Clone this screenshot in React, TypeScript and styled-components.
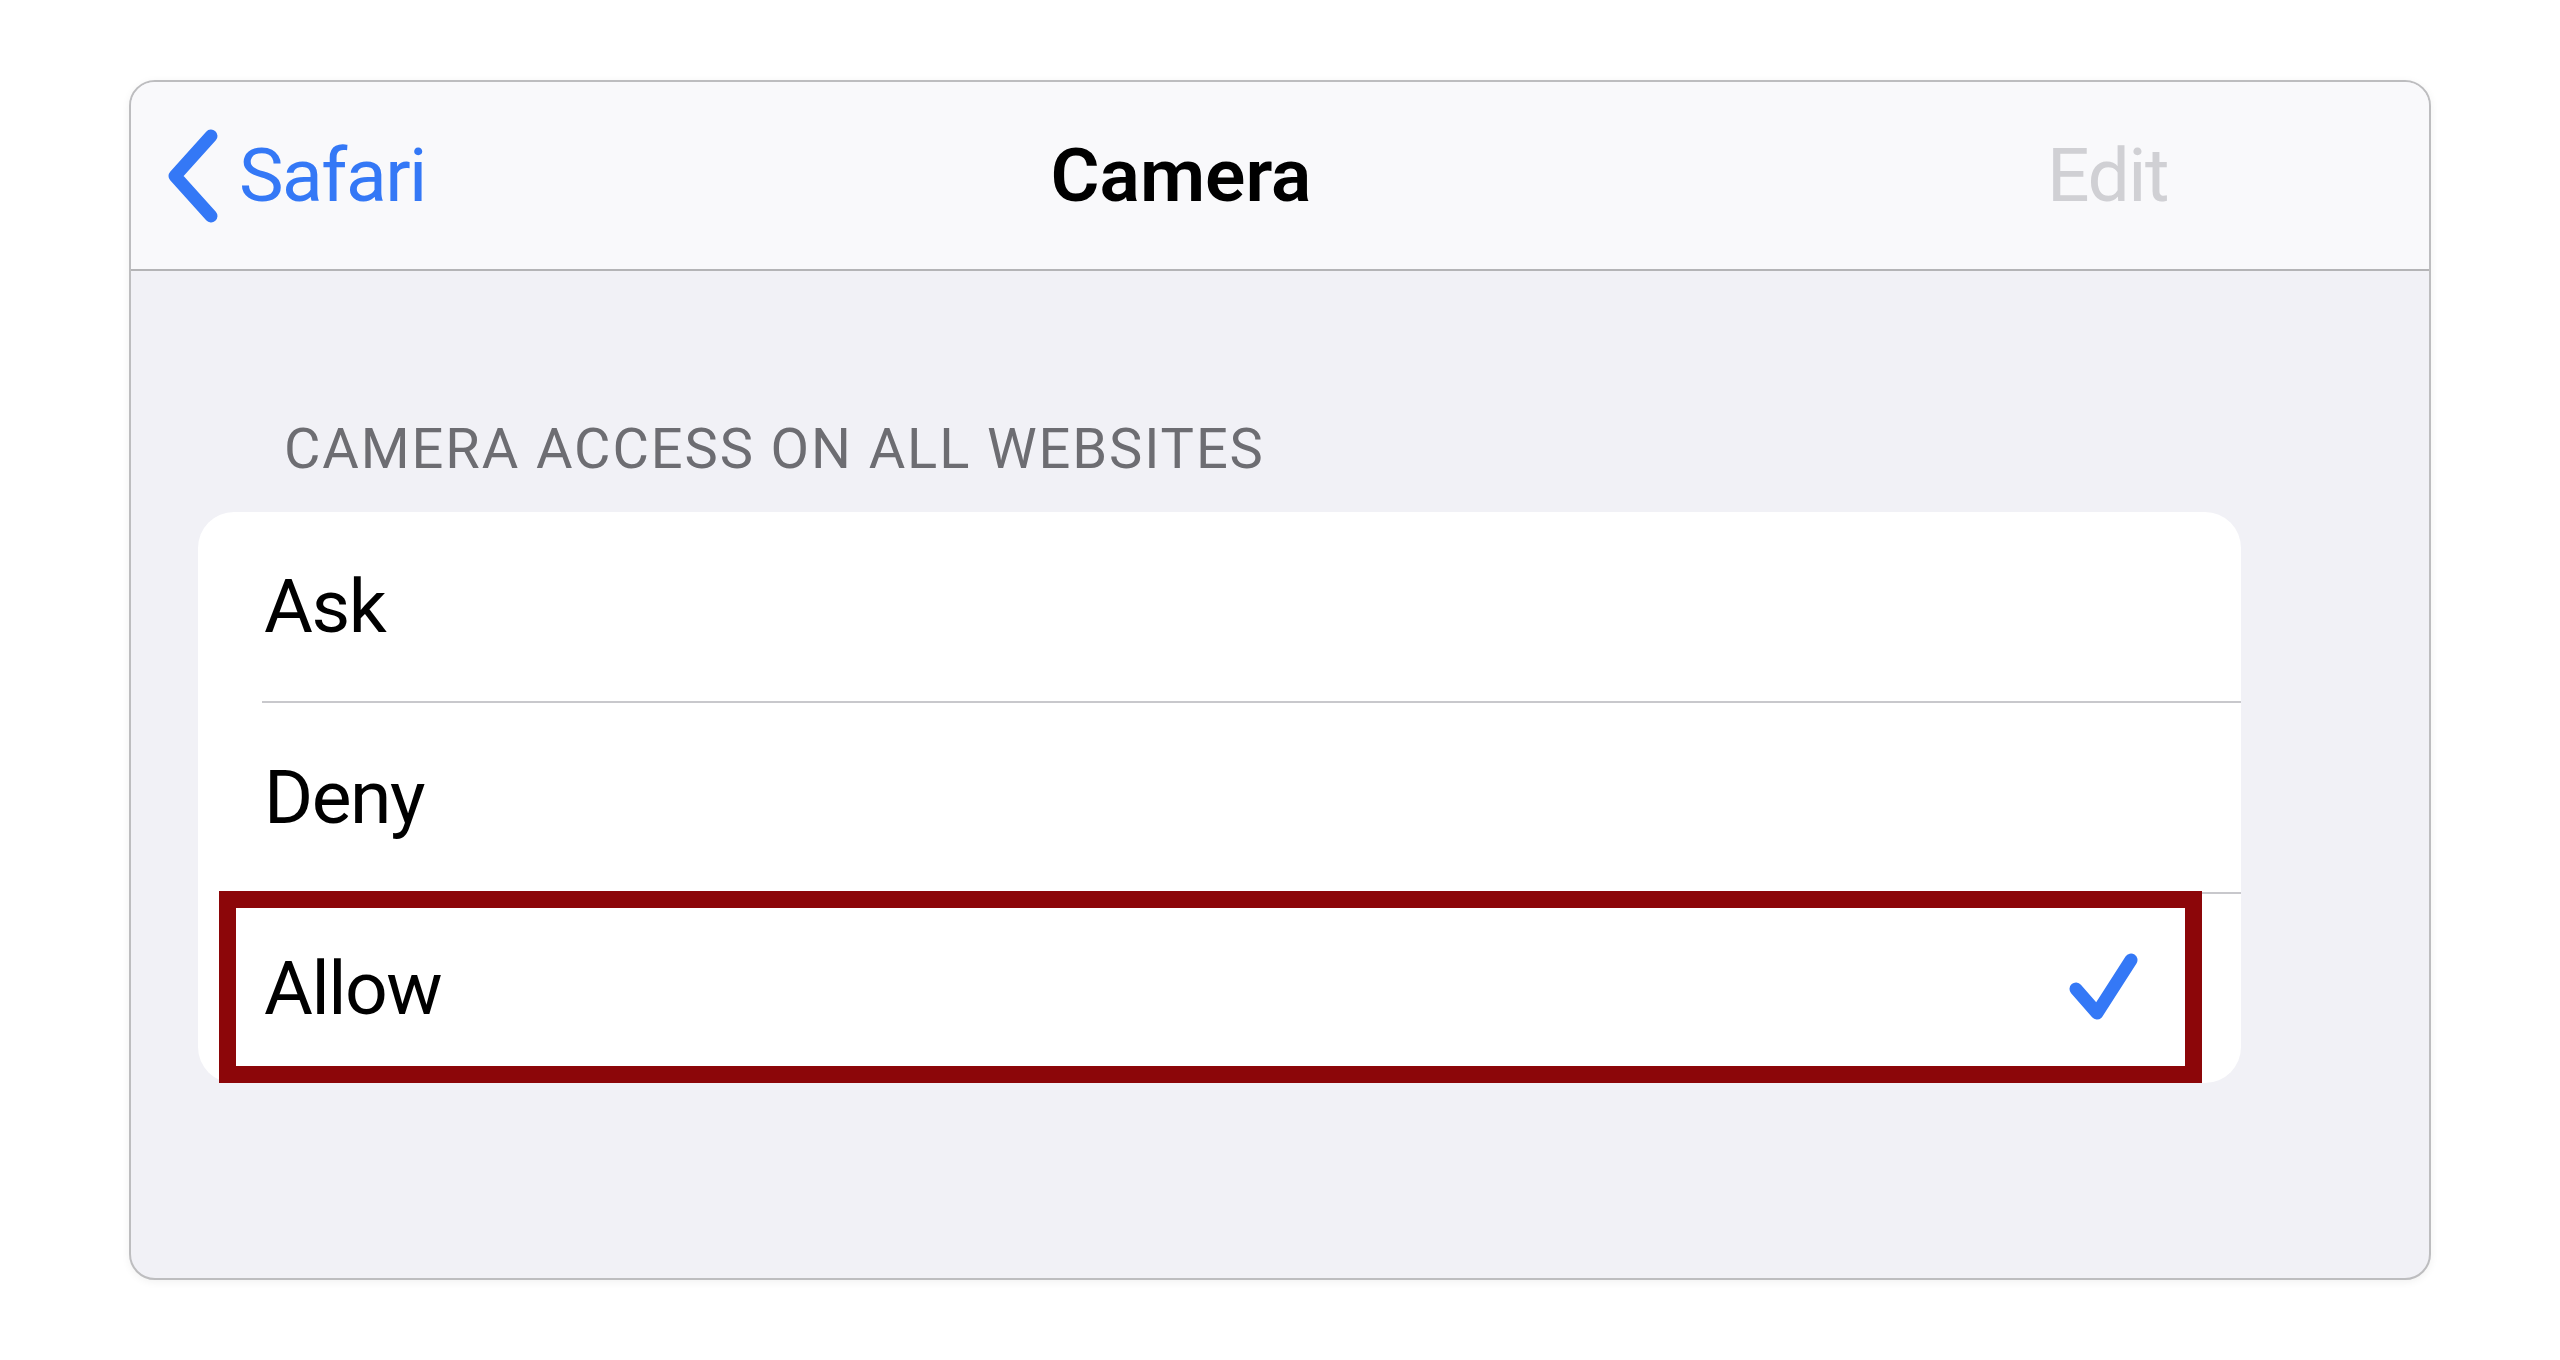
import React from "react";
import styled, { createGlobalStyle } from "styled-components";

const GlobalStyle = createGlobalStyle`
  html, body {
    margin: 0;
    padding: 0;
    background: #ffffff;
  }
  body {
    font-family: Roboto, "Liberation Sans", Arial, sans-serif;
    -webkit-font-smoothing: antialiased;
  }
  * { box-sizing: border-box; }
`;

const Page = styled.div`
  width: 2560px;
  height: 1360px;
  padding: 80px 0 0 129px;
`;

const Panel = styled.div`
  width: 2302px;
  height: 1200px;
  border: 2px solid #bdbdbf;
  border-radius: 26px;
  overflow: hidden;
  display: flex;
  flex-direction: column;
  background: #f1f1f6;
  box-shadow: 0 2px 8px rgba(0, 0, 0, 0.06);
`;

const NavBar = styled.div`
  height: 189px;
  flex: 0 0 auto;
  background: #f9f9fb;
  border-bottom: 2px solid #b4b4b6;
  display: grid;
  grid-template-columns: 1fr auto 1fr;
  align-items: center;
  padding: 0 228px 0 30px;
`;

const BackButton = styled.div`
  display: flex;
  align-items: center;
  gap: 12px;
  justify-self: start;
  color: #3478f6;
`;

const BackLabel = styled.span`
  font-size: 75px;
  line-height: 1;
  letter-spacing: -1.5px;
  color: #3478f6;
`;

const Title = styled.div`
  font-size: 75px;
  line-height: 1;
  font-weight: 600;
  color: #000000;
  letter-spacing: 0px;
`;

const EditButton = styled.div`
  justify-self: end;
  margin-right: 33px;
  font-size: 75px;
  line-height: 1;
  letter-spacing: -1.5px;
  color: #d0d0d4;
`;

const Content = styled.div`
  flex: 1 1 auto;
  padding: 150px 0 0 67px;
  display: flex;
  flex-direction: column;
`;

const SectionHeader = styled.div`
  font-size: 56px;
  line-height: 56px;
  letter-spacing: 1.9px;
  color: #6d6d72;
  margin-left: 86px;
  margin-bottom: 35px;
  text-transform: uppercase;
`;

const Card = styled.div`
  width: 2043px;
  background: #ffffff;
  border-radius: 36px;
  display: flex;
  flex-direction: column;
`;

const Row = styled.div<{ $divider?: boolean }>`
  position: relative;
  height: 189px;
  display: flex;
  align-items: center;
  justify-content: space-between;
  padding: 0 97px 0 66px;
  &::after {
    content: "";
    display: ${(p) => (p.$divider ? "block" : "none")};
    position: absolute;
    left: 64px;
    right: 0;
    bottom: -2px;
    height: 2px;
    background: #c8c8cc;
  }
  & + & {
    margin-top: 2px;
  }
`;

const RowLabel = styled.span`
  font-size: 75px;
  line-height: 1;
  letter-spacing: -1.5px;
  color: #000000;
`;

const Highlight = styled.div`
  position: absolute;
  top: -3px;
  bottom: 0;
  left: 21px;
  right: 39px;
  border: 17px solid #8c0609;
  pointer-events: none;
`;

const Chevron = () => (
  <svg width="66" height="100" viewBox="0 0 66 100" fill="none">
    <path
      d="M50 10 L14 50 L50 90"
      stroke="#3478f6"
      strokeWidth="13"
      strokeLinecap="round"
      strokeLinejoin="round"
    />
  </svg>
);

const Check = () => (
  <svg width="80" height="80" viewBox="0 0 80 80" fill="none">
    <path
      d="M12 40 L33 64 L67 11"
      stroke="#3478f6"
      strokeWidth="13"
      strokeLinecap="round"
      strokeLinejoin="round"
    />
  </svg>
);

const options = [
  { label: "Ask", selected: false },
  { label: "Deny", selected: false },
  { label: "Allow", selected: true },
];

export default function App() {
  return (
    <>
      <GlobalStyle />
      <Page>
        <Panel>
          <NavBar>
            <BackButton>
              <Chevron />
              <BackLabel>Safari</BackLabel>
            </BackButton>
            <Title>Camera</Title>
            <EditButton>Edit</EditButton>
          </NavBar>
          <Content>
            <SectionHeader>Camera Access on All Websites</SectionHeader>
            <Card>
              {options.map((o, i) => (
                <Row key={o.label} $divider={i < options.length - 1}>
                  <RowLabel>{o.label}</RowLabel>
                  {o.selected && <Check />}
                  {o.selected && <Highlight />}
                </Row>
              ))}
            </Card>
          </Content>
        </Panel>
      </Page>
    </>
  );
}
